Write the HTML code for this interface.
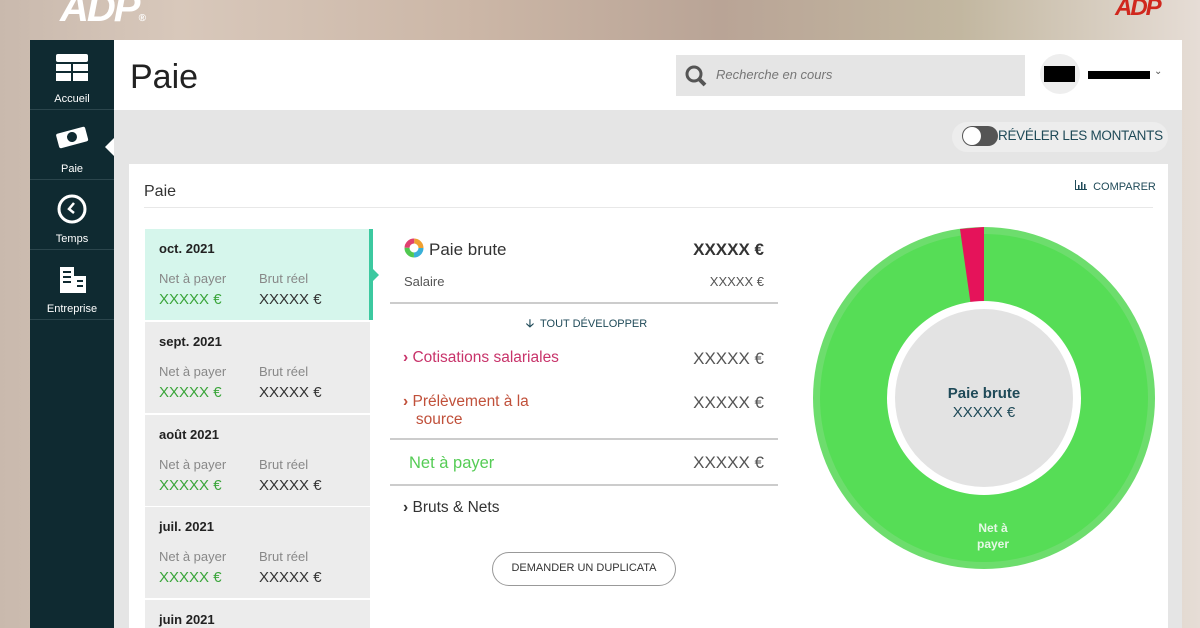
<!DOCTYPE html>
<html><head><meta charset="utf-8"><style>
*{margin:0;padding:0;box-sizing:border-box}
html,body{width:1200px;height:628px;overflow:hidden}
body{font-family:"Liberation Sans",sans-serif;position:relative;
background:linear-gradient(90deg,#c9b9ad 0%,#d8c8bb 15%,#cbb6a6 40%,#b9a496 60%,#c2b7a0 80%,#e6ddd6 100%)}
.abs{position:absolute}
.side{left:30px;top:40px;width:84px;height:588px;background:#0f2a31;color:#fff}
.nav{height:70px;border-bottom:1px solid #2b454c;text-align:center;font-size:11px;position:relative}
.nav span{position:absolute;left:0;right:0;bottom:4px}
.hdr{left:114px;top:40px;width:1068px;height:70px;background:#fff}
.band{left:114px;top:110px;width:1068px;height:518px;background:#e5e5e5}
.card{left:129px;top:164px;width:1039px;height:464px;background:#fff}
.item{left:145px;width:225px;height:91px;background:#ececec;font-size:14px;color:#333}
.item b{position:absolute;left:14px;top:12px;font-size:13px;font-weight:bold;color:#222}
.item .l{position:absolute;top:42px;color:#888;font-size:13px}
.item .v{position:absolute;top:62px;font-size:15px}
.hr{position:absolute;left:390px;width:388px;height:2px;background:#ccc}
.amt{position:absolute;right:436px;color:#555;font-size:17px}
</style></head><body>
<div class="abs" style="left:60px;top:-14px;font-size:40px;font-weight:bold;font-style:italic;color:#fff;letter-spacing:-2px">ADP<span style="font-size:10px">®</span></div>
<div class="abs" style="left:1115px;top:-6px;font-size:24px;font-weight:bold;font-style:italic;color:#d0271d;letter-spacing:-2px">ADP</div>

<div class="abs side">
 <div class="nav"><svg class="abs" style="left:26px;top:14px" width="32" height="28"><rect x="0" y="0" width="32" height="8" rx="2" fill="#fff"/><rect x="0" y="10" width="15" height="7" fill="#fff"/><rect x="17" y="10" width="15" height="7" fill="#fff"/><rect x="0" y="19" width="15" height="8" fill="#fff"/><rect x="17" y="19" width="15" height="8" fill="#fff"/></svg><span>Accueil</span></div>
 <div class="nav"><svg class="abs" style="left:24px;top:14px" width="36" height="26"><g transform="rotate(-15 18 13)"><rect x="3" y="6" width="30" height="15" rx="2" fill="#fff"/><circle cx="18" cy="13" r="5" fill="#0f2a31"/></g></svg><span>Paie</span>
 <div class="abs" style="right:0;top:28px;width:0;height:0;border-top:9px solid transparent;border-bottom:9px solid transparent;border-right:9px solid #fff"></div></div>
 <div class="nav"><svg class="abs" style="left:27px;top:14px" width="30" height="30"><circle cx="15" cy="15" r="13" fill="none" stroke="#fff" stroke-width="3"/><path d="M17 9 L12 15 L17 19" fill="none" stroke="#fff" stroke-width="2.5"/></svg><span>Temps</span></div>
 <div class="nav"><svg class="abs" style="left:28px;top:14px" width="30" height="30"><rect x="2" y="3" width="14" height="26" fill="#fff"/><rect x="16" y="12" width="12" height="17" fill="#fff"/><g fill="#0f2a31"><rect x="5" y="7" width="8" height="2"/><rect x="5" y="12" width="8" height="2"/><rect x="5" y="17" width="8" height="2"/><rect x="19" y="16" width="6" height="2"/><rect x="19" y="21" width="6" height="2"/></g></svg><span>Entreprise</span></div>
</div>

<div class="abs hdr">
 <div class="abs" style="left:16px;top:18px;font-size:34px;color:#222">Paie</div>
 <div class="abs" style="left:562px;top:15px;width:349px;height:41px;background:#e5e5e5">
  <svg class="abs" style="left:9px;top:10px" width="22" height="22"><circle cx="9" cy="9" r="7" fill="none" stroke="#555" stroke-width="3"/><path d="M14 14 L20 20" stroke="#555" stroke-width="4"/></svg>
  <div class="abs" style="left:40px;top:12px;font-size:13px;font-style:italic;color:#777">Recherche en cours</div></div>
 <div class="abs" style="left:926px;top:14px;width:40px;height:40px;border-radius:50%;background:#eee"></div>
 <div class="abs" style="left:930px;top:26px;width:31px;height:16px;background:#000"></div>
 <div class="abs" style="left:974px;top:31px;width:62px;height:8px;background:#000"></div>
 <div class="abs" style="left:1040px;top:26px;font-size:10px;color:#555">⌄</div>
</div>

<div class="abs band">
 <div class="abs" style="left:838px;top:12px;width:216px;height:30px;border-radius:15px;background:#ededed"></div>
 <div class="abs" style="left:848px;top:16px;width:36px;height:20px;border-radius:10px;background:#555"></div>
 <div class="abs" style="left:849px;top:17px;width:18px;height:18px;border-radius:50%;background:#fff"></div>
 <div class="abs" style="left:884px;top:18px;font-size:13.5px;color:#1f4a58;letter-spacing:-0.3px">RÉVÉLER LES MONTANTS</div>
</div>

<div class="abs card">
 <div class="abs" style="left:15px;top:19px;font-size:16px;color:#333">Paie</div>
 <div class="abs" style="left:946px;top:16px;font-size:11px;color:#1f4a58"><svg width="12" height="10"><path d="M0.5 0 V9.5 H12" stroke="#1f4a58" fill="none"/><rect x="3" y="5" width="1.5" height="4" fill="#1f4a58"/><rect x="6" y="2" width="1.5" height="7" fill="#1f4a58"/><rect x="9" y="4" width="1.5" height="5" fill="#1f4a58"/></svg> &nbsp;COMPARER</div>
 <div class="abs" style="left:15px;top:43px;width:1009px;height:1px;background:#e8e8e8"></div>
</div>

<div class="abs item" style="top:229px;background:#d6f6ec"><b>oct. 2021</b><div class="l" style="left:14px">Net à payer</div><div class="l" style="left:114px">Brut réel</div><div class="v" style="left:14px;color:#3aa53a">XXXXX €</div><div class="v" style="left:114px">XXXXX €</div></div>
<div class="abs" style="left:369px;top:229px;width:4px;height:91px;background:#3cc9a0"></div>
<div class="abs" style="left:373px;top:269px;border-top:6px solid transparent;border-bottom:6px solid transparent;border-left:6px solid #3cc9a0"></div>
<div class="abs item" style="top:322px"><b>sept. 2021</b><div class="l" style="left:14px">Net à payer</div><div class="l" style="left:114px">Brut réel</div><div class="v" style="left:14px;color:#3aa53a">XXXXX €</div><div class="v" style="left:114px">XXXXX €</div></div>
<div class="abs item" style="top:415px"><b>août 2021</b><div class="l" style="left:14px">Net à payer</div><div class="l" style="left:114px">Brut réel</div><div class="v" style="left:14px;color:#3aa53a">XXXXX €</div><div class="v" style="left:114px">XXXXX €</div></div>
<div class="abs item" style="top:507px"><b>juil. 2021</b><div class="l" style="left:14px">Net à payer</div><div class="l" style="left:114px">Brut réel</div><div class="v" style="left:14px;color:#3aa53a">XXXXX €</div><div class="v" style="left:114px">XXXXX €</div></div>
<div class="abs item" style="top:600px;height:28px"><b>juin 2021</b></div>

<svg class="abs" style="left:404px;top:238px" width="20" height="20"><circle cx="10" cy="10" r="7" fill="none" stroke="#3ab0d8" stroke-width="5" stroke-dasharray="11 33"/><circle cx="10" cy="10" r="7" fill="none" stroke="#f0a030" stroke-width="5" stroke-dasharray="11 33" stroke-dashoffset="11"/><circle cx="10" cy="10" r="7" fill="none" stroke="#e04070" stroke-width="5" stroke-dasharray="11 33" stroke-dashoffset="22"/><circle cx="10" cy="10" r="7" fill="none" stroke="#50c850" stroke-width="5" stroke-dasharray="11 33" stroke-dashoffset="33"/></svg>
<div class="abs" style="left:429px;top:240px;font-size:17px;color:#333">Paie brute</div>
<div class="abs" style="right:436px;top:240px;font-size:17px;font-weight:bold;color:#333">XXXXX €</div>
<div class="abs" style="left:404px;top:274px;font-size:13px;color:#555">Salaire</div>
<div class="abs" style="right:436px;top:274px;font-size:13px;color:#555">XXXXX €</div>
<div class="hr" style="top:302px"></div>
<div class="abs" style="left:526px;top:315px;font-size:11px;color:#1f4a58"><b>🡣</b> &nbsp;TOUT DÉVELOPPER</div>
<div class="abs" style="left:403px;top:349px;font-size:15.5px;color:#c8336a"><b>›</b> Cotisations salariales</div>
<div class="amt" style="top:349px">XXXXX €</div>
<div class="abs" style="left:403px;top:393px;font-size:15.5px;color:#c0503a;line-height:18px"><b>›</b> Prélèvement à la<br>&nbsp;&nbsp;&nbsp;source</div>
<div class="amt" style="top:393px">XXXXX €</div>
<div class="hr" style="top:438px"></div>
<div class="abs" style="left:409px;top:454px;font-size:16.5px;color:#55cc55">Net à payer</div>
<div class="amt" style="top:453px">XXXXX €</div>
<div class="hr" style="top:484px"></div>
<div class="abs" style="left:403px;top:499px;font-size:15.5px;color:#333"><b>›</b> Bruts &amp; Nets</div>
<div class="abs" style="left:492px;top:552px;width:184px;height:34px;border:1.5px solid #999;border-radius:17px;text-align:center;line-height:31px;font-size:11px;color:#333">DEMANDER UN DUPLICATA</div>

<svg class="abs" style="left:813px;top:227px" width="342" height="342">
 <circle cx="171" cy="171" r="171" fill="#6ddd6d"/>
 <circle cx="171" cy="171" r="164" fill="#56dd56"/>
 <path d="M171 171 L147 2 L171 0 Z" fill="#e5135a"/>
 <circle cx="171" cy="171" r="97" fill="#fff"/>
 <circle cx="171" cy="171" r="89" fill="#e3e3e3"/>
 <text x="171" y="171" text-anchor="middle" font-family="Liberation Sans" font-weight="bold" font-size="15" fill="#1f4a58">Paie brute</text>
 <text x="171" y="190" text-anchor="middle" font-family="Liberation Sans" font-size="15" fill="#1f4a58">XXXXX €</text>
 <text x="180" y="305" text-anchor="middle" font-family="Liberation Sans" font-weight="bold" font-size="12" fill="#e5f8e5">Net à</text>
 <text x="180" y="321" text-anchor="middle" font-family="Liberation Sans" font-weight="bold" font-size="12" fill="#e5f8e5">payer</text>
</svg>
</body></html>
